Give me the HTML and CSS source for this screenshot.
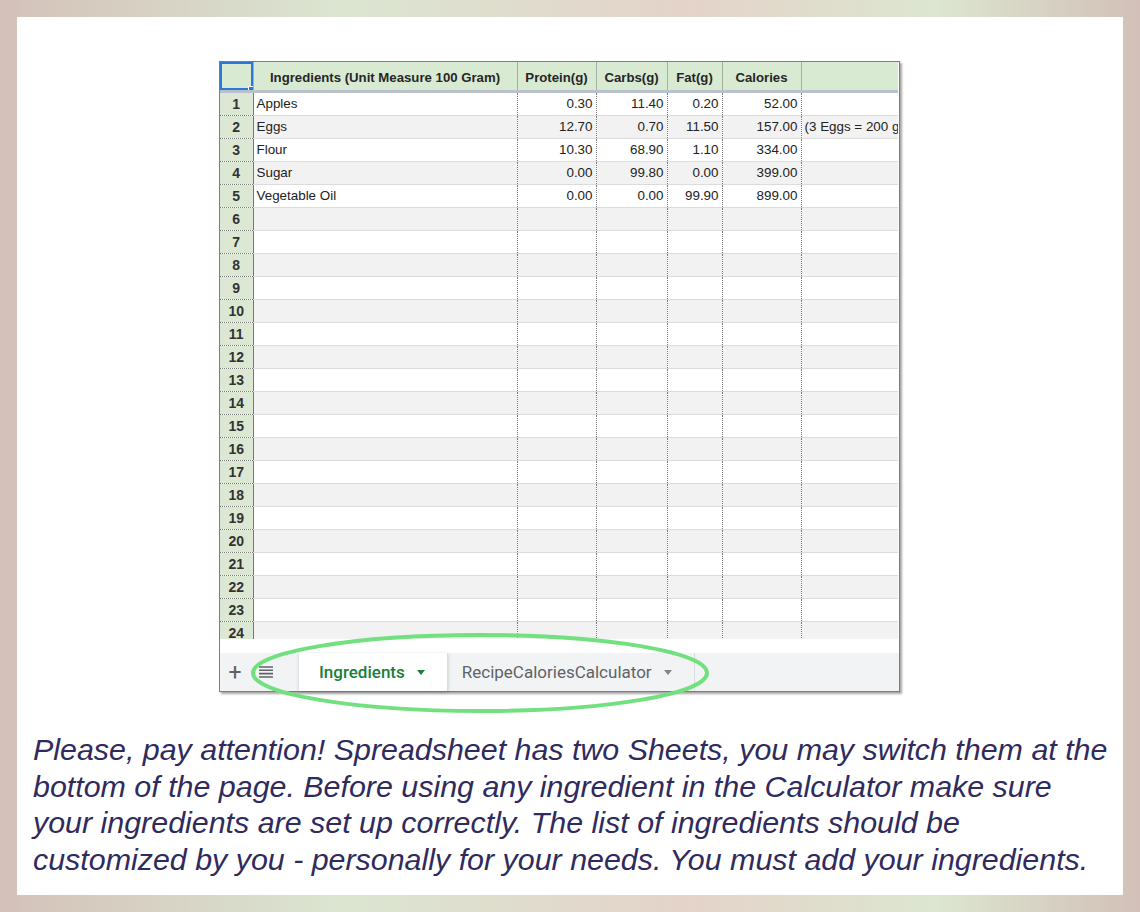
FILE: index.html
```html
<!DOCTYPE html>
<html lang="en">
<head>
  <meta charset="UTF-8">
  <title>Ingredients Spreadsheet</title>
  <link rel="stylesheet" href="styles.css">
</head>
<body>
  <div class="panel">
    <div class="sheet">
      <div class="grid">
        <table class="cells">
          <colgroup>
            <col class="c-num"><col class="c-name"><col class="c-pro"><col class="c-carb"><col class="c-fat"><col class="c-cal"><col class="c-extra">
          </colgroup>
          <thead>
            <tr>
              <th class="corner"><span class="handle"></span></th>
              <th>Ingredients (Unit Measure 100 Gram)</th>
              <th>Protein(g)</th>
              <th>Carbs(g)</th>
              <th>Fat(g)</th>
              <th>Calories</th>
              <th></th>
            </tr>
          </thead>
          <tbody id="rows">
            <tr><td class="num">1</td><td>Apples</td><td class="n">0.30</td><td class="n">11.40</td><td class="n">0.20</td><td class="n">52.00</td><td></td></tr>
            <tr><td class="num">2</td><td>Eggs</td><td class="n">12.70</td><td class="n">0.70</td><td class="n">11.50</td><td class="n">157.00</td><td class="note">(3 Eggs = 200 gr</td></tr>
            <tr><td class="num">3</td><td>Flour</td><td class="n">10.30</td><td class="n">68.90</td><td class="n">1.10</td><td class="n">334.00</td><td></td></tr>
            <tr><td class="num">4</td><td>Sugar</td><td class="n">0.00</td><td class="n">99.80</td><td class="n">0.00</td><td class="n">399.00</td><td></td></tr>
            <tr><td class="num">5</td><td>Vegetable Oil</td><td class="n">0.00</td><td class="n">0.00</td><td class="n">99.90</td><td class="n">899.00</td><td></td></tr>
            <tr><td class="num">6</td><td></td><td></td><td></td><td></td><td></td><td></td></tr>
            <tr><td class="num">7</td><td></td><td></td><td></td><td></td><td></td><td></td></tr>
            <tr><td class="num">8</td><td></td><td></td><td></td><td></td><td></td><td></td></tr>
            <tr><td class="num">9</td><td></td><td></td><td></td><td></td><td></td><td></td></tr>
            <tr><td class="num">10</td><td></td><td></td><td></td><td></td><td></td><td></td></tr>
            <tr><td class="num">11</td><td></td><td></td><td></td><td></td><td></td><td></td></tr>
            <tr><td class="num">12</td><td></td><td></td><td></td><td></td><td></td><td></td></tr>
            <tr><td class="num">13</td><td></td><td></td><td></td><td></td><td></td><td></td></tr>
            <tr><td class="num">14</td><td></td><td></td><td></td><td></td><td></td><td></td></tr>
            <tr><td class="num">15</td><td></td><td></td><td></td><td></td><td></td><td></td></tr>
            <tr><td class="num">16</td><td></td><td></td><td></td><td></td><td></td><td></td></tr>
            <tr><td class="num">17</td><td></td><td></td><td></td><td></td><td></td><td></td></tr>
            <tr><td class="num">18</td><td></td><td></td><td></td><td></td><td></td><td></td></tr>
            <tr><td class="num">19</td><td></td><td></td><td></td><td></td><td></td><td></td></tr>
            <tr><td class="num">20</td><td></td><td></td><td></td><td></td><td></td><td></td></tr>
            <tr><td class="num">21</td><td></td><td></td><td></td><td></td><td></td><td></td></tr>
            <tr><td class="num">22</td><td></td><td></td><td></td><td></td><td></td><td></td></tr>
            <tr><td class="num">23</td><td></td><td></td><td></td><td></td><td></td><td></td></tr>
            <tr><td class="num">24</td><td></td><td></td><td></td><td></td><td></td><td></td></tr>
          </tbody>
        </table>
      </div>
      <div class="tabbar">
        <span class="tool plus">+</span>
        <span class="tool">
          <svg width="14" height="12" viewBox="0 0 14 12"><path d="M0 1h14M0 4.3h14M0 7.6h14M0 11h14" stroke="#5f6368" stroke-width="1.6"/></svg>
        </span>
        <div class="tab active">Ingredients <span class="caret"></span></div>
        <div class="tab">RecipeCaloriesCalculator <span class="caret"></span></div>
      </div>
    </div>

    <svg class="ring" width="470" height="86" viewBox="0 0 470 86">
      <ellipse cx="235" cy="43" rx="227" ry="38" fill="none" stroke="#72e07e" stroke-width="4"/>
    </svg>

    <p class="note-text">Please, pay attention! Spreadsheet has two Sheets, you may switch them at the bottom of the page. Before using any ingredient in the Calculator make sure your ingredients are set up correctly. The list of ingredients should be customized by you - personally for your needs. You must add your ingredients.</p>
  </div>
</body>
</html>
```

FILE: styles.css
```css
body {
  margin: 0;
  padding: 17px;
  height: 912px;
  box-sizing: border-box;
  background: linear-gradient(90deg, #d4c1b9 0%, #dbe6d1 30%, #e4d3c9 60%, #dce6d0 82%, #d3c0b8 100%);
}
.panel {
  position: relative;
  background: #fff;
  width: 1106px;
  height: 878px;
  padding: 44px 0 0 202px;
  box-sizing: border-box;
}
.sheet {
  width: 681px;
  border: 1px solid #7d7d7d;
  box-shadow: 2px 2px 2px rgba(0,0,0,0.35);
  box-sizing: border-box;
  background: #fff;
}
.grid {
  height: 577px;
  overflow: hidden;
  border-bottom: 14px solid #fff;
}
.cells {
  border-collapse: collapse;
  table-layout: fixed;
  width: 678px;
  font-family: "Liberation Sans", Arial, sans-serif;
  font-size: 13.4px;
  color: #222;
}
.c-num { width: 33px; }
.c-name { width: 264px; }
.c-pro { width: 79px; }
.c-carb { width: 71px; }
.c-fat { width: 55px; }
.c-cal { width: 79px; }
.c-extra { width: 97px; }

.cells th {
  height: 26px;
  padding: 2px 0 0;
  background: #d9ead3;
  font-size: 13.2px;
  font-weight: bold;
  color: #262626;
  border-left: 1px solid #a6b0a0;
  border-bottom: 3px solid #b8c0c9;
  white-space: nowrap;
  overflow: hidden;
}
.cells th.corner {
  position: relative;
  border-left: none;
  box-shadow: inset 0 0 0 2px #2a79d6;
}
.handle {
  position: absolute;
  right: -4px;
  bottom: -5px;
  width: 7px;
  height: 7px;
  background: #2a79d6;
  border: 1px solid #fff;
}
.cells td {
  height: 22px;
  padding: 0 3px;
  line-height: 16px;
  border-bottom: 1px solid #dcdcdc;
  border-left: 1px dotted #7a7a7a;
  white-space: nowrap;
  overflow: hidden;
}
.cells tbody tr:nth-child(even) td { background: #f2f2f2; }
.cells td.num {
  background: #dde8d4 !important;
  text-align: center;
  font-size: 14px;
  font-weight: bold;
  color: #333;
  border-left: none;
  border-bottom: 1px dotted #7a7a7a;
  padding: 0;
}
.cells td:nth-child(2) { border-left: 1px solid #777; }
.cells td.n { text-align: right; }
.cells td.note { padding-left: 3px; text-overflow: clip; }

.tabbar {
  display: flex;
  align-items: stretch;
  height: 38px;
  background: #f1f3f4;
  font-family: Roboto, "Liberation Sans", sans-serif;
}
.tool {
  display: flex;
  align-items: center;
  justify-content: center;
  width: 35px;
  color: #5f6368;
}
.tool.plus {
  font-size: 23px;
  line-height: 1;
  width: 26px;
  padding-left: 2px;
}
.tab {
  display: flex;
  align-items: center;
  padding: 0 22px 0 14px;
  font-size: 17px;
  color: #5f6368;
  border-right: 1px solid #dadce0;
}
.tab.active {
  margin-left: 16px;
  background: #fff;
  color: #188038;
  font-weight: 500;
  padding: 0 22px 0 20px;
  box-shadow: 0 1px 3px rgba(60,64,67,0.25);
}
.caret {
  display: inline-block;
  margin-left: 12px;
  border-left: 4px solid transparent;
  border-right: 4px solid transparent;
  border-top: 5px solid currentColor;
}
.tab:not(.active) .caret { border-top-color: #80868b; }

.ring {
  position: absolute;
  left: 228px;
  top: 613px;
}
.note-text {
  margin: 39px 0 0 -186px;
  width: 1078px;
  font-family: "Liberation Sans", Arial, sans-serif;
  font-style: italic;
  font-size: 30.4px;
  line-height: 36.5px;
  color: #2f2b5d;
}
```
